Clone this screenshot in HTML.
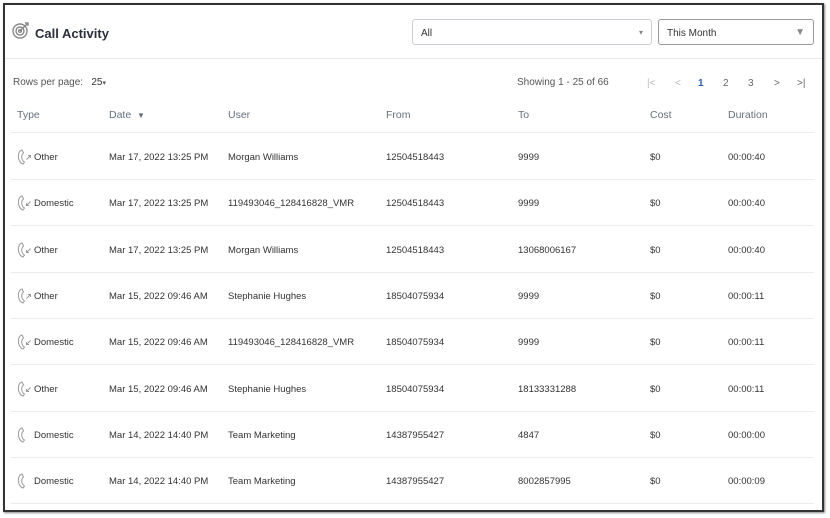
<!DOCTYPE html>
<html><head><style>
*{margin:0;padding:0;box-sizing:border-box}
body{width:830px;height:518px;background:#fff;font-family:"Liberation Sans",sans-serif;position:relative;overflow:hidden}
.frame{position:absolute;left:3px;top:3px;width:821px;height:509px;border:2px solid #333;box-shadow:1px 1px 2px #888;background:#fff;overflow:hidden}
.abs{position:absolute;white-space:nowrap}
.title{left:30px;top:21px;font-size:13px;font-weight:bold;color:#2a2f3a}
.hdrline{position:absolute;left:0;right:0;top:53px;height:1px;background:#e8e8e8}
.sel{position:absolute;height:26px;border:1px solid #c8ccd2;border-radius:3px;font-size:10px;color:#333;padding:8px 8px}
.sel span{position:absolute;right:8px;top:8px;font-size:8px;color:#888}
.small{font-size:10px;color:#555}
.th{font-size:10.5px;color:#66707c;top:104px}
.td{font-size:9.5px;color:#333}
.row{position:absolute;left:6px;right:8px;height:1px;background:#ececec}
.pg{font-size:10px;color:#666;top:73px}
</style></head><body>
<div class="frame">
<svg class="abs" style="left:6px;top:15px" width="20" height="20" viewBox="0 0 20 20" fill="none" stroke="#888" stroke-width="1.4"><circle cx="9" cy="11" r="7"/><circle cx="9" cy="11" r="4"/><circle cx="9" cy="11" r="1.3"/><path d="M9 11 L16 4 M14 3 l3 0 0 3"/></svg>
<div class="abs title">Call Activity</div>
<div class="sel" style="left:407px;top:14px;width:240px">All<span>▾</span></div>
<div class="sel" style="left:653px;top:14px;width:156px;border-color:#999">This Month<span style="font-size:10px;top:7px">▼</span></div>
<div class="hdrline"></div>
<div class="abs small" style="left:8px;top:72px">Rows per page:&nbsp;&nbsp; <span style="color:#333">25</span><span style="font-size:7px">▾</span></div>
<div class="abs small" style="left:512px;top:72px">Showing 1 - 25 of 66</div>
<div class="abs pg" style="left:642px;color:#bbb">|&lt;</div>
<div class="abs pg" style="left:670px;color:#bbb">&lt;</div>
<div class="abs pg" style="left:693px;color:#2a5db0;font-weight:bold">1</div>
<div class="abs pg" style="left:718px">2</div>
<div class="abs pg" style="left:743px">3</div>
<div class="abs pg" style="left:769px">&gt;</div>
<div class="abs pg" style="left:792px">&gt;|</div>
<div class="abs th" style="left:12px">Type</div>
<div class="abs th" style="left:104px">Date&nbsp; <span style="font-size:8px">▼</span></div>
<div class="abs th" style="left:223px">User</div>
<div class="abs th" style="left:381px">From</div>
<div class="abs th" style="left:513px">To</div>
<div class="abs th" style="left:645px">Cost</div>
<div class="abs th" style="left:723px">Duration</div>
<div class="row" style="top:127px"></div>
<div id="rows"></div>
<script>
var d=[["o","Other","Mar 17, 2022 13:25 PM","Morgan Williams","12504518443","9999","00:00:40"],
["i","Domestic","Mar 17, 2022 13:25 PM","119493046_128416828_VMR","12504518443","9999","00:00:40"],
["i","Other","Mar 17, 2022 13:25 PM","Morgan Williams","12504518443","13068006167","00:00:40"],
["o","Other","Mar 15, 2022 09:46 AM","Stephanie Hughes","18504075934","9999","00:00:11"],
["i","Domestic","Mar 15, 2022 09:46 AM","119493046_128416828_VMR","18504075934","9999","00:00:11"],
["i","Other","Mar 15, 2022 09:46 AM","Stephanie Hughes","18504075934","18133331288","00:00:11"],
["","Domestic","Mar 14, 2022 14:40 PM","Team Marketing","14387955427","4847","00:00:00"],
["","Domestic","Mar 14, 2022 14:40 PM","Team Marketing","14387955427","8002857995","00:00:09"]];
var h="";
d.forEach(function(r,i){var y=147+i*46.3;
var ar=r[0]=="o"?'<path d="M10.5 10.5 L14.5 6.5 M12 6.5 H14.5 V9"/>':(r[0]=="i"?'<path d="M14.5 6.5 L10.5 10.5 M10.5 8 V10.5 H13"/>':'');
h+='<svg class="abs" style="left:11px;top:'+(y-3)+'px" width="17" height="16" viewBox="0 0 17 16" fill="none" stroke="#999" stroke-width="1"><path d="M6 1 C1 2 1 13 7 15 L8.5 13 C5 11 5 6 7.5 4 Z"/>'+ar+'</svg>';
h+='<div class="abs td" style="left:29px;top:'+y+'px">'+r[1]+'</div>';
h+='<div class="abs td" style="left:104px;top:'+y+'px">'+r[2]+'</div>';
h+='<div class="abs td" style="left:223px;top:'+y+'px">'+r[3]+'</div>';
h+='<div class="abs td" style="left:381px;top:'+y+'px">'+r[4]+'</div>';
h+='<div class="abs td" style="left:513px;top:'+y+'px">'+r[5]+'</div>';
h+='<div class="abs td" style="left:645px;top:'+y+'px">$0</div>';
h+='<div class="abs td" style="left:723px;top:'+y+'px">'+r[6]+'</div>';
h+='<div class="row" style="top:'+(y+27)+'px"></div>';});
document.getElementById("rows").innerHTML=h;
</script>
</div>
</body></html>
